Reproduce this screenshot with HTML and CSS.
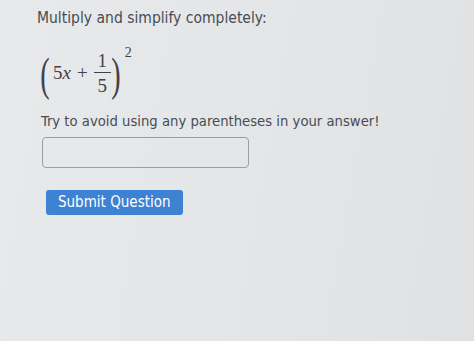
FILE: index.html
```html
<!DOCTYPE html>
<html lang="en">
<head>
  <meta charset="UTF-8" />
  <title>Question</title>
  <link rel="stylesheet" href="styles.css">
</head>
<body>
  <div class="question">
    <p class="prompt">Multiply and simplify completely:</p>
    <div class="math">
      <span class="paren">(</span>
      <span class="term">5<i>x</i></span>
      <span class="op">+</span>
      <span class="frac"><span class="num">1</span><span class="den">5</span></span>
      <span class="paren close">)</span>
      <sup class="pow">2</sup>
    </div>
    <p class="hint">Try to avoid using any parentheses in your answer!</p>
    <input type="text" class="answer" />
    <div class="actions">
      <button type="button" class="submit">Submit Question</button>
    </div>
  </div>
</body>
</html>
```

FILE: styles.css
```css
body { margin: 0; background: linear-gradient(100deg, #e7e9eb 0%, #e3e5e7 60%, #dfe1e3 100%); font-family: "DejaVu Sans Condensed", "DejaVu Sans", sans-serif; color: #484d54; height: 341px; overflow: hidden; }
.question { padding: 9px 0 0 37px; }
.prompt { margin: 0; font-size: 15.5px; }
.math { display: flex; align-items: center; margin: 18px 0 0 4px; height: 56px; font-family: "Liberation Serif", serif; color: #3f4348; }
.paren { display: inline-flex; justify-content: center; width: 8px; font-size: 47px; line-height: 1; transform: translateY(1px) scaleX(0.6); }
.paren.close { margin-left: 1px; }
.term { font-size: 19px; margin: 0 6px 0 4px; }
.op { font-size: 19px; margin-right: 6px; }
.frac { display: inline-flex; flex-direction: column; align-items: center; width: 17px; font-size: 19px; }
.frac .num { align-self: stretch; text-align: center; padding-bottom: 2px; border-bottom: 1px solid #3f4348; line-height: 1; }
.frac .den { padding-top: 3px; line-height: 1; }
.pow { align-self: flex-start; font-size: 14px; margin-left: 5px; margin-top: 0; }
.hint { margin: 11px 0 0 4px; font-size: 14.7px; }
.answer { display: block; margin: 8px 0 0 5px; width: 207px; height: 31px; box-sizing: border-box; border: 1px solid #9b9fa3; border-radius: 4px; background: transparent; }
.actions { margin-top: 22px; }
.submit { margin-left: 9px; background: #3d82d3; color: #fff; border: none; border-radius: 3px; font-family: inherit; font-size: 15px; padding: 2px 12px 4px; height: 25px; }
```
